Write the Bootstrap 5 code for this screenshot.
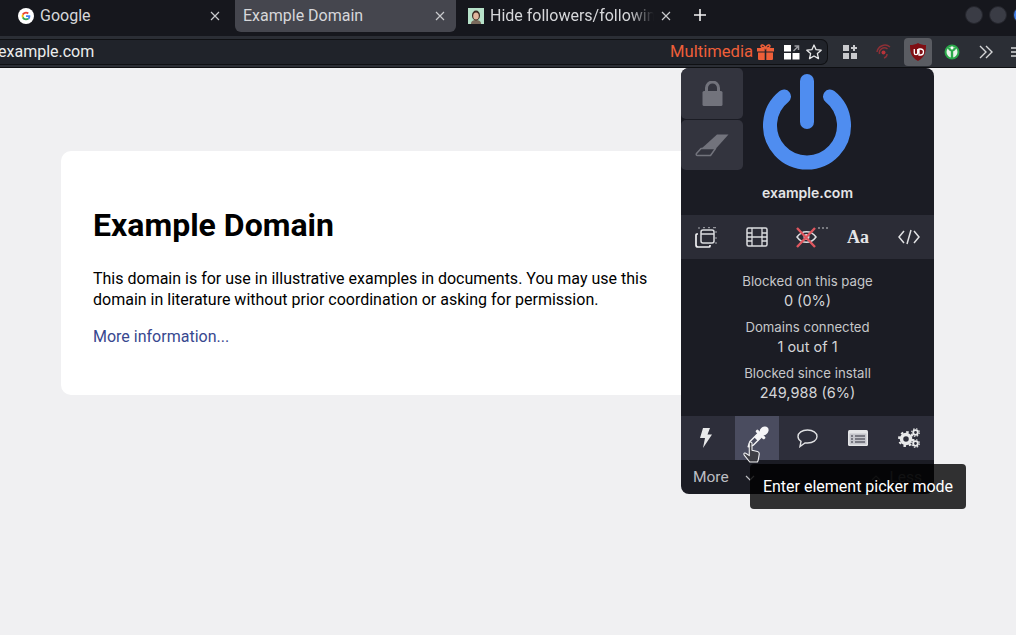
<!DOCTYPE html>
<html lang="en">
<head>
<meta charset="utf-8">
<title>Example Domain</title>
<link href="https://cdn.jsdelivr.net/npm/bootstrap@5.3.0/dist/css/bootstrap.min.css" rel="stylesheet">
<style>
html,body{height:100%;}
body{width:1016px;height:635px;overflow:hidden;background:#f0f0f2;font-family:Roboto,"Liberation Sans",sans-serif;position:relative;}
.tabstrip{height:36px;background:#16171d;color:#d6d7da;font-size:16px;padding-bottom:4px;}
.tabitem{height:32px;padding:0 10px 0 18px;width:221px;gap:6px;border-radius:0 0 6px 6px;flex:none;}
.tabitem.first{width:233px;padding:0 12px 0 18px;margin-right:2px;}
.tabitem.on{background:#45464e;padding-left:8px;margin-right:2px;}
.tabitem.third{padding-left:10px;width:224px;}
.tablabel{flex:1;white-space:nowrap;overflow:hidden;line-height:30px;}
.fade-end{-webkit-mask-image:linear-gradient(to right,#000 85%,transparent 100%);mask-image:linear-gradient(to right,#000 85%,transparent 100%);}
.xmark{flex:none;width:12px;height:12px;}
.plusic{margin:8px 0 0 11px;flex:none;}
.winrow{gap:6px;margin:6px -15px 0 auto;flex:none;}
.winbtn{width:18px;height:18px;border-radius:50%;background:#3a3c45;border:1px solid #24252c;flex:none;}
.winbtn.blue{background:#3f7de8;}
.toolbarrow{height:32px;background:#2b2e35;border-bottom:1px solid #0e0f12;}
.omnibox{width:828px;height:26px;background:#20232a;border:1px solid #0f1013;border-left:0;border-radius:0 7px 7px 0;color:#eceded;font-size:16px;flex:none;padding-right:4px;}
.omnitext{margin-left:-2px;line-height:26px;flex:1;}
.mm{color:#ef5f39;font-size:16.600px;line-height:26px;margin-right:4px;}
.giftic{margin-right:10px;}
.appsic{margin-right:5px;}
.extrow{gap:6px;margin-left:8px;flex:none;}
.extslot{flex:none;width:28px;height:28px;border-radius:4px;}
.extslot.on{background:#5a5c62;}
.pagearea{padding:83px 0 0 61px;}
.democard{width:664px;height:244px;background:#fff;border-radius:10px;padding:32px;color:#000;}
.democard h1{font-size:32px;font-weight:700;line-height:38px;margin:23px 0 24px;}
.democard p{font-size:16px;line-height:21px;margin:0 0 16px;width:600px;}
.democard a{color:#38488f;text-decoration:none;}
.ubo{position:absolute;left:681px;top:68px;width:253px;height:426px;background:#1b1c24;border-radius:8px;color:#d4d5d8;overflow:hidden;}
.ubotop{height:147px;display:grid;grid-template-columns:62px 1fr 62px;}
.sidebtn{height:51px;background:#33343e;border-radius:5px;margin-bottom:1px;}
.sidebtn.low{height:50px;}
.domainname{font-family:Inter,Roboto,sans-serif;font-weight:600;font-size:14px;line-height:18px;color:#e4e5e7;margin-top:12px;text-align:center;}
.tools5{height:44px;background:#2b2c36;}
.toolcell{flex:0 0 20%;height:100%;}
.toolcell.hot{background:#4a4c5f;border-left:3px solid #2d2e3a;border-right:3px solid #2d2e3a;}
.aa-glyph{font-family:"Liberation Serif",serif;font-size:18px;color:#e4e5e7;}
.eyeic{margin-left:9px;}
.stats{height:157px;padding-top:13px;text-align:center;font-family:Inter,Roboto,sans-serif;}
.statlabel{font-size:13.200px;line-height:19px;color:#c6c7ca;}
.statvalue{font-size:14.500px;line-height:20px;margin-bottom:7px;color:#d4d5d8;}
.bottomtools{height:44px;background:#2d2e3a;}
.morerow{height:34px;padding:2px 12px 0;font-size:15.500px;color:#bdbec2;}
.lessword{color:#55565c;}
.tiptext{position:absolute;left:750px;top:464px;width:216px;height:45px;background:rgba(0,0,0,.8);border-radius:4px;color:#fff;font-size:16px;line-height:45px;text-align:center;white-space:nowrap;}
.handptr{position:absolute;left:742px;top:441px;width:20px;height:22px;}
</style>
</head>
<body>
<div class="tabstrip d-flex align-items-start">
  <div class="tabitem first d-flex align-items-center">
    <svg width="16" height="16" viewBox="0 0 48 48" class="flex-none"><circle cx="24" cy="24" r="24" fill="#fff"/><path fill="#ea4335" d="M24 11c3.400 0 6.300 1.200 8.600 3.400l-4 4c-1.200-1.100-2.800-1.800-4.600-1.800-3.200 0-5.900 2.200-6.900 5l-4.700-3.600C14.500 13.700 18.900 11 24 11z"/><path fill="#4285f4" d="M37 24.300c0-1-.1-1.900-.3-2.800H24v5.300h7.300c-.3 1.700-1.300 3.200-2.800 4.200l4.500 3.500c2.600-2.400 4-6 4-10.200z"/><path fill="#fbbc05" d="M17.100 26.400c-.5-1.500-.5-3.200 0-4.800l-4.700-3.600c-1.900 3.800-1.900 8.200 0 12z"/><path fill="#34a853" d="M24 37c3.500 0 6.500-1.200 8.700-3.200l-4.500-3.500c-1.200.8-2.600 1.300-4.200 1.300-3.200 0-5.900-2.100-6.900-5l-4.700 3.600C14.600 34.300 19 37 24 37z"/></svg>
    <span class="tablabel">Google</span>
    <svg class="xmark" viewBox="0 0 12 12"><path d="M2 2l8 8M10 2l-8 8" stroke="#c9cacd" stroke-width="1.200" fill="none"/></svg>
  </div>
  <div class="tabitem on d-flex align-items-center">
    <span class="tablabel">Example Domain</span>
    <svg class="xmark" viewBox="0 0 12 12"><path d="M2 2l8 8M10 2l-8 8" stroke="#c9cacd" stroke-width="1.200" fill="none"/></svg>
  </div>
  <div class="tabitem third d-flex align-items-center">
    <svg width="16" height="16" viewBox="0 0 16 16" class="flex-none"><rect width="16" height="16" fill="#b7e2c9"/><path d="M3 16c0-3 2-4 5-4s5 1 5 4z" fill="#7a6a5c"/><ellipse cx="8" cy="7.500" rx="4" ry="5" fill="#3b2a22"/><ellipse cx="8" cy="8" rx="2.800" ry="3.600" fill="#e2b79e"/></svg>
    <span class="tablabel fade-end">Hide followers/following</span>
    <svg class="xmark" viewBox="0 0 12 12"><path d="M2 2l8 8M10 2l-8 8" stroke="#c9cacd" stroke-width="1.200" fill="none"/></svg>
  </div>
  <svg width="14" height="14" viewBox="0 0 14 14" class="plusic"><path d="M7 1v12M1 7h12" stroke="#f2f2f3" stroke-width="1.600"/></svg>
  <div class="winrow d-flex">
    <span class="winbtn"></span><span class="winbtn"></span><span class="winbtn blue"></span>
  </div>
</div>
<div class="toolbarrow d-flex align-items-center">
  <div class="omnibox d-flex align-items-center">
    <span class="omnitext">example.com</span>
    <span class="mm">Multimedia</span>
    <svg width="17" height="16" viewBox="0 0 17 16" class="giftic"><path fill="#ef5f39" d="M0 4h7.700v3.500H0zM9.300 4H17v3.500H9.300zM1 8.500h6.700V16H2a1 1 0 0 1-1-1zM9.300 8.500H16V15a1 1 0 0 1-1 1H9.300z"/><path fill="none" stroke="#ef5f39" stroke-width="1.500" d="M8.500 4C6 4 4 3.500 4 2c0-1.800 3-1.500 4.500 2 1.500-3.500 4.500-3.800 4.500-2 0 1.500-2 2-4.500 2z"/></svg>
    <svg width="16" height="16" viewBox="0 0 16 16" class="appsic"><path fill="#fff" d="M0 1h7v6.500H0zM0 9h7v6.500H0zM8.500 9h7v6.500h-7z"/><path d="M9.500 7l4.500-4.500M10.500 2h4v4" stroke="#9b9da3" stroke-width="1.500" fill="none"/></svg>
    <svg width="18" height="18" viewBox="0 0 18 18"><path d="M9 2l2.100 4.700 5.100.5-3.800 3.400 1.100 5L9 13l-4.500 2.600 1.100-5L1.800 7.200l5.100-.5z" fill="none" stroke="#e8e9ea" stroke-width="1.300" stroke-linejoin="round"/></svg>
  </div>
  <div class="extrow d-flex align-items-center">
    <span class="extslot d-flex align-items-center justify-content-center">
      <svg width="16" height="16" viewBox="0 0 16 16"><path fill="#c9cacd" d="M1 1h6v6H1zM1 9h6v6H1zM9 9h6v6H9zM11 1h2v2h2v2h-2v2h-2V5H9V3h2z"/></svg>
    </span>
    <span class="extslot d-flex align-items-center justify-content-center">
      <svg width="18" height="18" viewBox="0 0 18 18"><circle cx="8.500" cy="9.500" r="2" fill="#b8333a"/><path d="M4.500 11a5 5 0 0 1 8-5M2 9a8 8 0 0 1 13-5M12 11a4 4 0 0 1-3 4" fill="none" stroke="#8c3036" stroke-width="1.500"/></svg>
    </span>
    <span class="extslot on d-flex align-items-center justify-content-center">
      <svg width="16" height="18" viewBox="0 0 16 18"><path d="M8 0c2.500 1.500 5 2 8 2 0 7-1 12-8 16C1 14 0 9 0 2c3 0 5.500-.5 8-2z" fill="#800f14"/><path d="M4.300 6v4a1.700 1.700 0 0 0 3.400 0V6M9 6v6h1.500a3 3 0 0 0 0-6z" fill="none" stroke="#fff" stroke-width="1.300"/></svg>
    </span>
    <span class="extslot d-flex align-items-center justify-content-center">
      <svg width="16" height="16" viewBox="0 0 16 16"><circle cx="8" cy="8" r="7.500" fill="#2aa84a"/><circle cx="8" cy="8" r="5.500" fill="#e9f3ea"/><path d="M6.800 6h2.400v9H6.800z" fill="#2aa84a"/><path d="M3.500 3.500c1 3 3 4 4.500 4s3.500-1 4.500-4z" fill="#2aa84a"/><circle cx="8" cy="4" r="1.500" fill="#fff"/></svg>
    </span>
    <span class="extslot d-flex align-items-center justify-content-center">
      <svg width="16" height="14" viewBox="0 0 16 14"><path d="M2 1l6 6-6 6M8 1l6 6-6 6" fill="none" stroke="#d5d6d8" stroke-width="1.400"/></svg>
    </span>
    <svg width="6" height="14" viewBox="0 0 6 14" class="ms-1 flex-none"><path d="M1 3h5M1 7h5M1 11h5" stroke="#d5d6d8" stroke-width="1.600"/></svg>
  </div>
</div>
<div class="pagearea">
  <div class="democard">
    <h1>Example Domain</h1>
    <p>This domain is for use in illustrative examples in documents. You may use this domain in literature without prior coordination or asking for permission.</p>
    <p><a href="#">More information...</a></p>
  </div>
</div>

<div class="ubo">
  <div class="ubotop">
    <div>
      <div class="sidebtn d-flex align-items-center justify-content-center">
        <svg width="21" height="25" viewBox="0 0 21 25"><path d="M4.500 11V7a6 6 0 0 1 12 0v4" fill="none" stroke="#72737c" stroke-width="3"/><rect x="0.500" y="10" width="20" height="15" rx="1.500" fill="#72737c"/></svg>
      </div>
      <div class="sidebtn low d-flex align-items-center justify-content-center">
        <svg width="34" height="23" viewBox="0 0 34 23"><path d="M22 .5h11.500L20.500 15H6z" fill="#72737c"/><path d="M6 14.500h14.500L15.500 21.500H2.500a1.200 1.200 0 0 1-1-2z" fill="#33343e" stroke="#72737c" stroke-width="1.500" stroke-linejoin="round"/></svg>
      </div>
    </div>
    <div>
      <div class="d-flex justify-content-center pt-1">
        <svg width="90" height="100" viewBox="0 0 90 100"><path d="M21 24.500a37 37 0 1 0 46 0" fill="none" stroke="#4f8df0" stroke-width="14" stroke-linecap="round"/><path d="M44 9v41" fill="none" stroke="#4f8df0" stroke-width="14" stroke-linecap="round"/></svg>
      </div>
      <div class="domainname text-nowrap">example.com</div>
    </div>
    <div></div>
  </div>
  <div class="tools5 d-flex align-items-center">
    <div class="toolcell d-flex align-items-center justify-content-center">
      <svg width="22" height="21" viewBox="0 0 22 21"><rect x="6" y="3" width="13" height="13" rx="2" fill="none" stroke="#dcdde0" stroke-width="1.500"/><path d="M6 7h13" stroke="#dcdde0" stroke-width="1.500"/><path d="M3 7H1.800A1 1 0 0 0 1 8v10a2 2 0 0 0 2 2h11a1 1 0 0 0 1-1v-1" fill="none" stroke="#f0f0f2" stroke-width="1.700"/><path d="M3 1h2M8 .7h2M13 .7h2M18 .7h3M21 4v2M21 10v2M21 15v2" stroke="#a9aab0" stroke-width="1"/></svg>
    </div>
    <div class="toolcell d-flex align-items-center justify-content-center">
      <svg width="22" height="20" viewBox="0 0 22 20"><rect x="1" y="1" width="20" height="18" rx="1.500" fill="none" stroke="#dcdde0" stroke-width="1.500"/><path d="M6 1v18M16 1v18M1 6h5M1 10h5M1 14h5M16 6h5M16 10h5M16 14h5M6 10h10" stroke="#dcdde0" stroke-width="1.300"/></svg>
    </div>
    <div class="toolcell d-flex align-items-center justify-content-center">
      <svg width="33" height="22" viewBox="0 0 33 22" class="eyeic"><path d="M2 11c5-7 14-7 19 0-5 7-14 7-19 0z" fill="none" stroke="#dcdde0" stroke-width="1.500"/><circle cx="11.500" cy="11" r="3" fill="#dcdde0"/><path d="M2 2l18 19M20 2L2 21" stroke="#e0575f" stroke-width="2.400"/><path d="M23 2h2M27 2h2M31 2h2" stroke="#c8c9cc" stroke-width="1"/></svg>
    </div>
    <div class="toolcell d-flex align-items-center justify-content-center">
      <span class="fw-bold text-nowrap aa-glyph">Aa</span>
    </div>
    <div class="toolcell d-flex align-items-center justify-content-center">
      <svg width="22" height="16" viewBox="0 0 22 16"><path d="M6 2L1 8l5 6M16 2l5 6-5 6M13 1L9 15" fill="none" stroke="#e0e1e3" stroke-width="1.500"/></svg>
    </div>
  </div>
  <div class="stats">
    <div class="statlabel">Blocked on this page</div>
    <div class="statvalue">0 (0%)</div>
    <div class="statlabel">Domains connected</div>
    <div class="statvalue">1 out of 1</div>
    <div class="statlabel">Blocked since install</div>
    <div class="statvalue">249,988 (6%)</div>
  </div>
  <div class="bottomtools d-flex align-items-center">
    <div class="toolcell d-flex align-items-center justify-content-center">
      <svg width="12" height="20" viewBox="0 0 12 20"><path d="M3 0h7L7.500 6.500H12L3 20l2-10H0z" fill="#e8e9ea"/></svg>
    </div>
    <div class="toolcell hot d-flex align-items-center justify-content-center">
      <svg width="24" height="26" viewBox="0 0 24 26"><g transform="rotate(45 12 13)"><ellipse cx="12" cy="3" rx="4" ry="5" fill="#f5f5f7"/><rect x="6" y="6.500" width="12" height="3" rx="1.200" fill="#f5f5f7"/><path d="M9.500 9.500h5v11l-2.500 5-2.500-5z" fill="#4a4c5f" stroke="#f5f5f7" stroke-width="1.400" stroke-linejoin="round"/><path d="M9.500 9.500h5v5h-5z" fill="#f5f5f7"/></g></svg>
    </div>
    <div class="toolcell d-flex align-items-center justify-content-center">
      <svg width="21" height="19" viewBox="0 0 21 19"><path d="M10.500 1C5 1 1 3.700 1 7.500c0 2 1.200 3.700 3 4.800L3 17.500l5-3.600c.8.100 1.600.1 2.500.1 5.500 0 9.500-2.700 9.500-6.500S16 1 10.500 1z" fill="none" stroke="#e0e1e3" stroke-width="1.400"/></svg>
    </div>
    <div class="toolcell d-flex align-items-center justify-content-center">
      <svg width="20" height="16" viewBox="0 0 20 16"><rect width="20" height="16" rx="1.500" fill="#e4e5e7"/><path d="M1.500 3.500h17v11h-17z" fill="#c4c5cb"/><path d="M3 6h2M3 9h2M3 12h2M7 6h10M7 9h10M7 12h10" stroke="#2d2e3a" stroke-width="1.200"/></svg>
    </div>
    <div class="toolcell d-flex align-items-center justify-content-center">
      <svg width="22" height="20" viewBox="0 0 22 20"><circle cx="8" cy="11" r="4.500" fill="none" stroke="#e8e9ea" stroke-width="3.500"/><circle cx="8" cy="11" r="7" fill="none" stroke="#e8e9ea" stroke-width="2" stroke-dasharray="2.500 3"/><circle cx="17.500" cy="4.500" r="2.300" fill="none" stroke="#e8e9ea" stroke-width="1.800"/><circle cx="17.500" cy="15.500" r="2.300" fill="none" stroke="#e8e9ea" stroke-width="1.800"/><circle cx="17.500" cy="4.500" r="3.800" fill="none" stroke="#e8e9ea" stroke-width="1.200" stroke-dasharray="1.500 1.500"/><circle cx="17.500" cy="15.500" r="3.800" fill="none" stroke="#e8e9ea" stroke-width="1.200" stroke-dasharray="1.500 1.500"/></svg>
    </div>
  </div>
  <div class="morerow d-flex align-items-center">
    <span>More</span>
    <svg width="10" height="6" viewBox="0 0 10 6" class="ms-3"><path d="M1 1l4 4 4-4" fill="none" stroke="#bdbec2" stroke-width="1.200"/></svg>
    <svg width="10" height="6" viewBox="0 0 10 6" class="ms-auto me-2"><path d="M1 5l4-4 4 4" fill="none" stroke="#55565c" stroke-width="1.200"/></svg>
    <span class="lessword">Less</span>
  </div>
</div>
<div class="tiptext">Enter element picker mode</div>
<svg class="handptr" viewBox="0 0 22 24"><path d="M8 2.500a1.500 1.500 0 0 1 3 0V10l6 1.500c1.500.4 2 1.200 2 2.500l-.8 5c-.2 1.500-.6 3-1.200 4H8.500L2.500 15.500c-.8-1-.5-2 .3-2.300s1.600.2 2.200.8L8 16z" fill="#3b3b3f" fill-opacity=".85" stroke="#f2f2f4" stroke-width="1.200" stroke-linejoin="round"/></svg>
</body>
</html>
